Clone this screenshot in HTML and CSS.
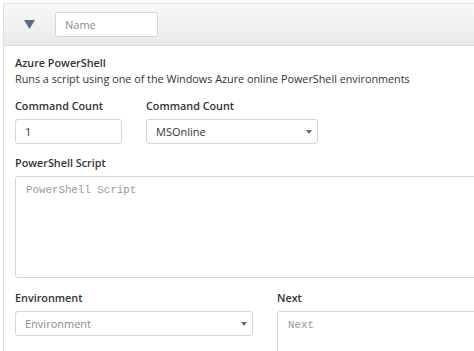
FILE: index.html
```html
<!DOCTYPE html>
<html lang="en">
<head>
    <meta charset="UTF-8">
    <title>Azure PowerShell Step</title>
    <link rel="stylesheet" href="styles.css">
</head>
<body>

<div class="panel">
    <div class="panel-header">
        <span class="toggle">
            <svg width="11" height="9" viewBox="0 0 11 9"><path d="M0 0 H11 L5.5 9 Z" fill="#5b6a8a"/></svg>
        </span>
        <input type="text" class="name-input" placeholder="Name">
    </div>
    <div class="panel-body">
        <div class="step-title">Azure PowerShell</div>
        <div class="step-desc">Runs a script using one of the Windows Azure online PowerShell environments</div>

        <div class="row row-count">
            <div class="form-group">
                <label>Command Count</label>
                <input type="text" class="field" value="1">
            </div>
            <div class="form-group">
                <label>Command Count</label>
                <div class="field select">MSOnline<span class="caret"></span></div>
            </div>
        </div>

        <div class="form-group">
            <label>PowerShell Script</label>
            <textarea class="field script" placeholder="PowerShell Script"></textarea>
        </div>

        <div class="row row-env">
            <div class="form-group">
                <label>Environment</label>
                <div class="field select placeholder">Environment<span class="caret"></span></div>
            </div>
            <div class="form-group">
                <label>Next</label>
                <textarea class="field next" placeholder="Next"></textarea>
            </div>
        </div>
    </div>
</div>

</body>
</html>
```

FILE: styles.css
```css
body {
    margin: 0;
    background-color: white;
    font-family: 'Open Sans', 'Liberation Sans', sans-serif;
    font-size: 10.8px;
    color: #333;
    overflow: hidden;
}
.panel {
    margin: 3px -20px 0 3px;
    border-left: 1px solid #dcdcdc;
    border-top: 1px solid #e2e2e2;
    height: 400px;
}
.panel-header {
    display: flex;
    align-items: center;
    height: 41px;
    padding-left: 20px;
    background: linear-gradient(#f8f8f8, #eaeaea);
    border-bottom: 1px solid #dddddd;
}
.toggle {
    display: flex;
    width: 11px;
    margin-right: 20px;
}
.name-input {
    box-sizing: border-box;
    width: 103px;
    height: 25px;
    padding: 0 9px;
    border: 1px solid #d4d4d4;
    border-radius: 3px;
    font-family: inherit;
    font-size: 11px;
    background: white;
}
.name-input::placeholder {
    color: #8a8a8a;
}
.panel-body {
    padding: 9px 0 0 11px;
}
.step-title {
    font-weight: 600;
    line-height: 16px;
}
.step-desc {
    line-height: 16px;
}
.row {
    display: grid;
    column-gap: 24px;
}
.row-count {
    grid-template-columns: 107px 172px;
}
.row-env {
    grid-template-columns: 238px 1fr;
}
.form-group label {
    display: block;
    font-weight: 600;
    line-height: 16px;
    margin-top: 11px;
    margin-bottom: 5px;
}
.row-env .form-group label {
    margin-top: 12px;
}
.field {
    box-sizing: border-box;
    display: block;
    width: 100%;
    height: 25px;
    padding: 0 9px;
    border: 1px solid #d6d6d6;
    border-radius: 3px;
    font-family: inherit;
    font-size: 11px;
    color: #333;
    background: white;
    margin: 0;
}
.select {
    display: flex;
    align-items: center;
    justify-content: space-between;
    padding-right: 5px;
}
.select.placeholder {
    color: #8a8a8a;
}
.caret {
    width: 0;
    height: 0;
    border-left: 3px solid transparent;
    border-right: 3px solid transparent;
    border-top: 4px solid #666;
}
textarea.field {
    font-family: 'Liberation Mono', monospace;
    font-size: 10.8px;
    padding: 7px 10px;
    resize: none;
}
textarea.field::placeholder {
    color: #999;
}
.script {
    height: 102px;
}
.next {
    height: 60px;
}
```
